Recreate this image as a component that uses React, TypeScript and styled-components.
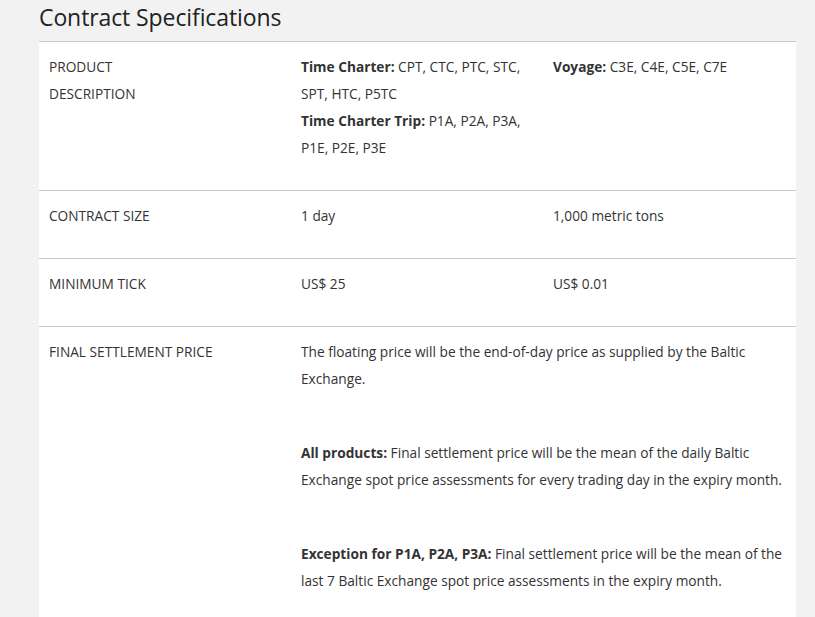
import React from "react";
import styled, { createGlobalStyle } from "styled-components";

const GlobalStyle = createGlobalStyle`
  body {
    margin: 0;
    background: #f2f2f2;
    font-family: "Open Sans", "Noto Sans", sans-serif;
    color: #333;
  }
`;

const Page = styled.div`
  padding: 0 19px 0 39px;
`;

const Title = styled.h2`
  margin: 0 0 6px;
  font-size: 23px;
  font-weight: 400;
  letter-spacing: -0.1px;
  line-height: 35px;
  color: #222;
`;

const Panel = styled.div`
  background: #fff;
  border-top: 1px solid #c8c8c8;
  width: 757px;
`;

const Row = styled.div`
  display: grid;
  grid-template-columns: 252px 252px 253px;
  border-bottom: 1px solid #c8c8c8;
  padding: 11px 0 29px;
`;

const Cell = styled.div<{ $span?: number }>`
  padding: 0 10px;
  font-size: 13.7px;
  line-height: 27px;
  grid-column: span ${(p) => p.$span || 1};
`;

const Label = styled(Cell)`
  text-transform: uppercase;
`;

const Para = styled.p`
  margin: 0 0 47px;
  &:last-child {
    margin-bottom: 0;
  }
`;

const Line = styled.div``;

const specs = [
  { label: "Contract size", a: "1 day", b: "1,000 metric tons" },
  { label: "Minimum tick", a: "US$ 25", b: "US$ 0.01" },
];

const App = () => (
  <>
    <GlobalStyle />
    <Page>
      <Title>Contract Specifications</Title>
      <Panel>
        <Row>
          <Label>
            Product
            <br />
            Description
          </Label>
          <Cell>
            <Line>
              <b>Time Charter:</b> CPT, CTC, PTC, STC, SPT, HTC, P5TC
            </Line>
            <Line>
              <b>Time Charter Trip:</b> P1A, P2A, P3A, P1E, P2E, P3E
            </Line>
          </Cell>
          <Cell>
            <b>Voyage:</b> C3E, C4E, C5E, C7E
          </Cell>
        </Row>
        {specs.map((s) => (
          <Row key={s.label}>
            <Label>{s.label}</Label>
            <Cell>{s.a}</Cell>
            <Cell>{s.b}</Cell>
          </Row>
        ))}
        <Row>
          <Label>Final settlement price</Label>
          <Cell $span={2}>
            <Para>
              The floating price will be the end-of-day price as supplied by
              the Baltic Exchange.
            </Para>
            <Para>
              <b>All products:</b> Final settlement price will be the mean of
              the daily Baltic Exchange spot price assessments for every
              trading day in the expiry month.
            </Para>
            <Para>
              <b>Exception for P1A, P2A, P3A:</b> Final settlement price will be
              the mean of the last 7 Baltic Exchange spot price assessments in
              the expiry month.
            </Para>
          </Cell>
        </Row>
      </Panel>
    </Page>
  </>
);

export default App;
